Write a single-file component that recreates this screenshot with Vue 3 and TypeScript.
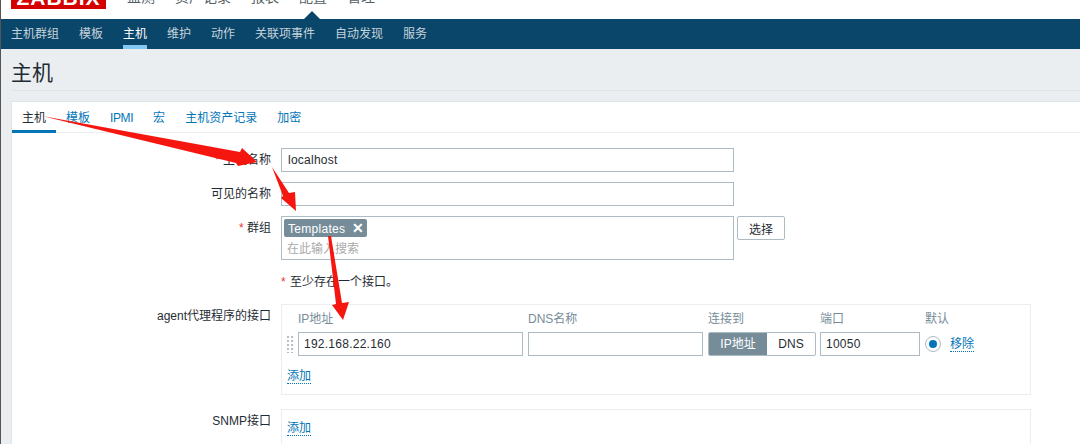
<script setup lang="ts">
const topItems = ['监测', '资产记录', '报表', '配置', '管理']
const subItems = ['主机群组', '模板', '主机', '维护', '动作', '关联项事件', '自动发现', '服务']
const tabs = ['主机', '模板', 'IPMI', '宏', '主机资产记录', '加密']
</script>

<template>
  <div class="page">
    <header class="top">
      <div class="logo">ZABBIX</div>
      <nav class="top-nav">
        <span v-for="t in topItems" :key="t" class="top-item">{{ t }}</span>
      </nav>
      <i class="caret"></i>
    </header>
    <nav class="sub">
      <span v-for="s in subItems" :key="s" class="sub-item" :class="{ on: s === '主机' }">{{ s }}</span>
    </nav>
    <main class="main">
      <h1 class="title">主机</h1>
      <section class="card">
        <div class="tabs">
          <span
            v-for="t in tabs"
            :key="t"
            class="tab"
            :class="{ on: t === '主机', tight: t === 'IPMI' }"
          >{{ t }}</span>
        </div>
        <div class="form">
          <div class="row r1">
            <label class="lab"><em>*</em> 主机名称</label>
            <div class="input wide">localhost</div>
          </div>
          <div class="row r2">
            <label class="lab">可见的名称</label>
            <div class="input wide"></div>
          </div>
          <div class="row r3">
            <label class="lab"><em>*</em> 群组</label>
            <div class="multi">
              <span class="tag">Templates <b>✕</b></span>
              <span class="ph">在此输入搜索</span>
            </div>
            <button class="btn">选择</button>
          </div>
          <div class="row r4">
            <span class="lab"></span>
            <span class="note"><em>*</em> 至少存在一个接口。</span>
          </div>
          <div class="row r5">
            <label class="lab">agent代理程序的接口</label>
            <div class="box">
              <div class="heads">
                <span class="c-ip">IP地址</span>
                <span class="c-dns">DNS名称</span>
                <span class="c-conn">连接到</span>
                <span class="c-port">端口</span>
                <span>默认</span>
              </div>
              <div class="cells">
                <i class="grip"></i>
                <div class="input c-ip">192.168.22.160</div>
                <div class="input c-dns"></div>
                <div class="seg c-conn"><span class="seg-on">IP地址</span><span class="seg-off">DNS</span></div>
                <div class="input c-port">10050</div>
                <span class="radio"><i></i></span>
                <a class="link">移除</a>
              </div>
              <a class="link add">添加</a>
            </div>
          </div>
          <div class="row r6">
            <label class="lab">SNMP接口</label>
            <div class="box snmp"><a class="link">添加</a></div>
          </div>
        </div>
      </section>
    </main>
    <svg class="arrows" width="1080" height="444" viewBox="0 0 1080 444">
      <polygon points="42,116 240,152 242,148 257,162 238,166 236,163" />
      <polygon points="272,167 289,193 295,192 296,211 281,198 283,196" />
      <polygon points="328,236 331,236 342,303 349,302 343,320 332,305 336,304" />
    </svg>
  </div>
</template>

<style>
html, body { margin: 0; background: #ebeef0; }
</style>

<style scoped>
.page {
  position: relative;
  width: 1080px;
  height: 444px;
  overflow: hidden;
  box-sizing: border-box;
  border-left: 1px solid #555;
  font-family: "Liberation Sans", "Noto Sans CJK SC", sans-serif;
  font-size: 12px;
  color: #1f2c33;
  background: #ebeef0;
}
em { color: #e33734; font-style: normal; }
.top {
  position: relative;
  height: 19px;
  background: #fff;
  display: flex;
  align-items: flex-end;
  overflow: hidden;
}
.logo {
  width: 95px;
  height: 28px;
  margin: 0 0 10px 10px;
  flex: none;
  background: #d40000;
  color: #fff;
  font-size: 21px;
  font-weight: 700;
  letter-spacing: 1px;
  line-height: 33px;
  text-align: center;
  overflow: hidden;
}
.top-nav { display: flex; margin-left: 21px; gap: 20px; }
.top-item { font-size: 14px; line-height: 20px; color: #555f66; position: relative; top: -12px; }
.caret {
  position: absolute;
  left: 303px;
  top: 11px;
  border: 8px solid transparent;
  border-top: 0;
  border-bottom-color: #0a466a;
}
.sub {
  height: 30px;
  background: #0a466a;
  display: flex;
  padding-left: 10px;
  gap: 20px;
}
.sub-item {
  color: #c6d3da;
  font-size: 12px;
  line-height: 30px;
  box-sizing: border-box;
  height: 30px;
}
.sub-item.on { color: #fff; border-bottom: 4px solid #84c8f4; }
.main { padding: 0 0 0 10px; }
.title {
  margin: 0;
  height: 41px;
  font-size: 21px;
  font-weight: 400;
  line-height: 48px;
  color: #1f2c33;
  border-bottom: 1px solid #dfe4e7;
}
.card {
  margin-top: 10px;
  background: #fff;
  border: 1px solid #dfe4e7;
  border-right: 0;
  height: 400px;
}
.tabs {
  display: flex;
  height: 30px;
  border-bottom: 1px solid #ebeef0;
}
.tab {
  padding: 0 10px;
  line-height: 33px;
  color: #0275b8;
  height: 31px;
  box-sizing: border-box;
  overflow: hidden;
}
.tab.tight { letter-spacing: -0.4px; }
.tab.on { color: #1f2c33; border-bottom: 3px solid #0275b8; }
.row { display: flex; align-items: flex-start; }
.lab {
  width: 259px;
  flex: none;
  text-align: right;
  margin-right: 10px;
  line-height: 24px;
}
.r1 { margin-top: 15px; }
.r2, .r3, .r4, .r5 { margin-top: 10px; }
.r4 { height: 24px; }
.r6 { margin-top: 14px; }
.input {
  box-sizing: border-box;
  height: 24px;
  border: 1px solid #acbbc4;
  padding: 0 5px;
  line-height: 22px;
  letter-spacing: 0.25px;
  background: #fff;
}
.wide { width: 453px; padding-left: 6px; line-height: 23px; }
.multi {
  box-sizing: border-box;
  width: 453px;
  height: 44px;
  border: 1px solid #acbbc4;
  padding: 2px;
  display: flex;
  flex-direction: column;
  align-items: flex-start;
}
.tag {
  background: #768d99;
  color: #fff;
  border-radius: 2px;
  height: 18px;
  line-height: 18px;
  padding: 0 3px 0 4px;
  letter-spacing: 0.3px;
}
.tag b { font-size: 14px; line-height: 18px; margin-left: 3px; }
.ph { color: #a9a9a9; line-height: 20px; margin-top: 2px; padding-left: 3px; }
.btn {
  margin-left: 3px;
  width: 48px;
  height: 24px;
  box-sizing: border-box;
  background: #fff;
  border: 1px solid #acbbc4;
  border-radius: 2px;
  font: inherit;
  color: #1f2c33;
  padding: 0;
}
.note { line-height: 25px; }
.note em { margin-right: 1px; }
.box {
  box-sizing: border-box;
  width: 750px;
  height: 91px;
  border: 1px solid #ebeef0;
  padding: 5px 5px 0 5px;
}
.heads, .cells { display: flex; }
.heads { color: #768d99; line-height: 19px; height: 22px; padding-left: 11px; }
.heads .c-ip { width: 230px; }
.heads .c-dns { width: 180px; }
.heads .c-conn { width: 112px; }
.heads .c-port { width: 105px; }
.cells { align-items: center; height: 24px; }
.grip {
  width: 8px;
  height: 18px;
  margin: 0 4px 0 -1px;
  flex: none;
  background-image: radial-gradient(circle, #b4bfc5 1.2px, transparent 1.5px);
  background-size: 4px 4px;
}
.cells .c-ip { width: 225px; margin-right: 5px; }
.cells .c-dns { width: 175px; margin-right: 5px; }
.seg {
  width: 108px;
  height: 24px;
  margin-right: 4px;
  box-sizing: border-box;
  display: flex;
  border: 1px solid #acbbc4;
  border-radius: 2px;
  line-height: 22px;
  text-align: center;
  overflow: hidden;
}
.seg-on { width: 58px; background: #768d99; color: #fff; }
.seg-off { flex: 1; }
.cells .c-port { width: 100px; margin-right: 5px; }
.radio {
  box-sizing: border-box;
  width: 16px;
  height: 16px;
  border: 1px solid #acbbc4;
  border-radius: 50%;
  display: flex;
  align-items: center;
  justify-content: center;
  margin-right: 9px;
}
.radio i { width: 8px; height: 8px; border-radius: 50%; background: #0275b8; }
.link {
  color: #0275b8;
  border-bottom: 1px dotted #0275b8;
  line-height: 14px;
  display: inline-block;
}
.add { margin-top: 13px; }
.snmp { padding-top: 11px; height: 60px; }
.arrows { position: absolute; left: -1px; top: 0; pointer-events: none; }
.arrows polygon { fill: #f5170f; }
</style>
